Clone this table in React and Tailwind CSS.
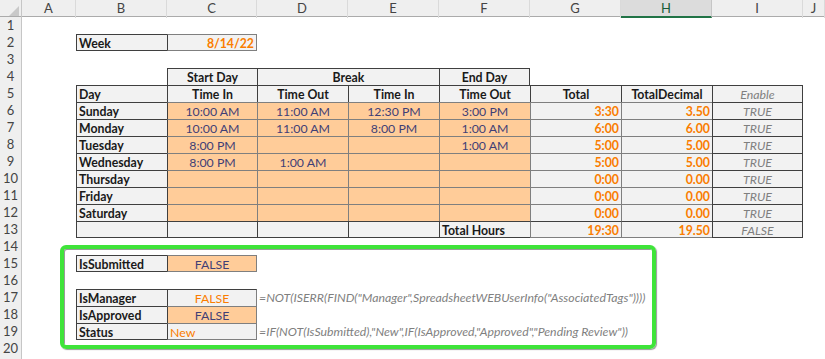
import React from "react";

// Timesheet workbook view: column/row headers, weekly grid and the approval block.

const EDGE = {
  t: { d: "border-t border-t-[#3f3f3f]", g: "border-t border-t-[#7f7f7f]" },
  l: { d: "border-l border-l-[#3f3f3f]", g: "border-l border-l-[#7f7f7f]" },
  r: { d: "border-r border-r-[#3f3f3f]", g: "border-r border-r-[#7f7f7f]" },
  b: { d: "border-b border-b-[#3f3f3f]", g: "border-b border-b-[#7f7f7f]" },
};

const KIND = {
  label: "bg-[#f2f2f2] font-bold text-[#1a1a1a] text-left pl-[2px]",
  head: "bg-[#f2f2f2] font-bold text-[#1a1a1a] text-center",
  input: "bg-[#ffcc99] text-[#3f3f76] text-center",
  calc: "bg-[#f2f2f2] font-bold text-[#fa7d00] text-right pr-[2px]",
  out: "bg-[#f2f2f2] text-[#fa7d00] text-center",
  outLeft: "bg-[#f2f2f2] text-[#fa7d00] text-left pl-[2px]",
  flag: "bg-[#f2f2f2] italic text-[#7f7f7f] text-center",
  blank: "bg-[#f2f2f2]",
  note: "italic text-[#7f7f7f] text-left pl-[2px] whitespace-nowrap overflow-visible",
  none: "",
};

const COLS = ["A", "B", "C", "D", "E", "F", "G", "H", "I", "J"];

// c(col, kind, text, edges, span) — col 0 is A, 1 is B ...
const c = (col, kind, text = "", edges = "", span = 1) => ({ col, kind, text, edges, span });

const days = [
  ["Sunday", "10:00 AM", "11:00 AM", "12:30 PM", "3:00 PM", "3:30", "3.50"],
  ["Monday", "10:00 AM", "11:00 AM", "8:00 PM", "1:00 AM", "6:00", "6.00"],
  ["Tuesday", "8:00 PM", "", "", "1:00 AM", "5:00", "5.00"],
  ["Wednesday", "8:00 PM", "1:00 AM", "", "", "5:00", "5.00"],
  ["Thursday", "", "", "", "", "0:00", "0.00"],
  ["Friday", "", "", "", "", "0:00", "0.00"],
  ["Saturday", "", "", "", "", "0:00", "0.00"],
];

const rows = {
  2: [c(1, "label", "Week", "td ld bd"), c(2, "calc", "8/14/22", "tg ld rg bg")],
  4: [
    c(2, "head", "Start Day", "td ld"),
    c(3, "head", "Break", "td ld", 2),
    c(5, "head", "End Day", "td ld rd"),
  ],
  5: [
    c(1, "label", "Day", "td ld"),
    c(2, "head", "Time In", "td ld"),
    c(3, "head", "Time Out", "td ld"),
    c(4, "head", "Time In", "td ld"),
    c(5, "head", "Time Out", "td ld"),
    c(6, "head", "Total", "td ld"),
    c(7, "head", "TotalDecimal", "td ld"),
    c(8, "flag", "Enable", "td ld rd"),
  ],
  13: [
    c(1, "blank", "", "td ld bd"),
    c(2, "blank", "", "td ld bd"),
    c(3, "blank", "", "td ld bd"),
    c(4, "blank", "", "td ld bd"),
    c(5, "label", "Total Hours", "td ld bd"),
    c(6, "calc", "19:30", "td lg bg"),
    c(7, "calc", "19.50", "td lg bg"),
    c(8, "flag", "FALSE", "td ld rd bd"),
  ],
  15: [c(1, "label", "IsSubmitted", "td ld bd"), c(2, "input", "FALSE", "tg ld rg bg")],
  17: [
    c(1, "label", "IsManager", "td ld"),
    c(2, "out", "FALSE", "td ld rg"),
    c(3, "note", '=NOT(ISERR(FIND("Manager",SpreadsheetWEBUserInfo("AssociatedTags"))))'),
  ],
  18: [c(1, "label", "IsApproved", "td ld"), c(2, "input", "FALSE", "tg ld rg")],
  19: [
    c(1, "label", "Status", "td ld bd"),
    c(2, "outLeft", "New", "tg ld rg bg"),
    c(3, "note", '=IF(NOT(IsSubmitted),"New",IF(IsApproved,"Approved","Pending Review"))'),
  ],
};

days.forEach((d, i) => {
  rows[6 + i] = [
    c(1, "label", d[0], "td ld"),
    c(2, "input", d[1], "tg ld"),
    c(3, "input", d[2], "tg lg"),
    c(4, "input", d[3], "tg lg"),
    c(5, "input", d[4], "tg lg"),
    c(6, "calc", d[5], "tg lg"),
    c(7, "calc", d[6], "tg lg"),
    c(8, "flag", "TRUE", "td ld rd"),
  ];
});

function edgeClasses(edges) {
  return edges
    .split(" ")
    .filter(Boolean)
    .map((e) => EDGE[e[0]][e[1]])
    .join(" ");
}

function SheetRow({ n, label }) {
  const cells = rows[n] || [];
  const filled = [];
  let col = 0;
  while (col < 10) {
    const cell = cells.find((x) => x.col === col);
    if (cell) {
      filled.push(cell);
      col += cell.span;
    } else {
      filled.push(c(col, "none"));
      col += 1;
    }
  }
  return (
    <div className="grid grid-cols-[22px_54px_91px_90px_91px_91px_91px_91px_91px_91px_1fr] h-[17px]">
      <div className="bg-[#efefef] border-r border-r-[#c6c6c6] text-[#444] text-[13px] leading-[17px] text-center">
        {label ? n : ""}
      </div>
      {filled.map((cell) => (
        <div
          key={cell.col}
          className={`box-border h-[17px] leading-[17px] text-[12.3px] ${cell.span === 2 ? "col-span-2" : ""} ${KIND[cell.kind]} ${edgeClasses(cell.edges)}`}
        >
          {cell.text}
        </div>
      ))}
      <div />
    </div>
  );
}

function ColumnHeader() {
  return (
    <div className="grid grid-cols-[22px_54px_91px_90px_91px_91px_91px_91px_91px_91px_1fr] h-[17px] bg-[#efefef] border-b border-b-[#ababab] box-border text-[13px] text-[#444] leading-[16px]">
      <div className="relative border-r border-r-[#c6c6c6]">
        <svg className="absolute right-[2px] bottom-[2px]" width="10" height="10" viewBox="0 0 10 10">
          <polygon points="10,0 10,10 0,10" fill="#c9c9c9" />
        </svg>
      </div>
      {COLS.map((L) =>
        L === "H" ? (
          <div key={L} className="text-center bg-[#dcdcdc] text-[#185c37] border-r border-r-[#c6c6c6] border-b-2 border-b-[#217346] box-border">
            {L}
          </div>
        ) : (
          <div key={L} className="text-center border-r border-r-[#dadada]">
            {L}
          </div>
        )
      )}
    </div>
  );
}

export default function App() {
  const nums = Array.from({ length: 21 }, (_, i) => i + 1);
  return (
    <div
      className="relative w-[825px] h-[359px] overflow-hidden bg-white"
      style={{ fontFamily: "Lato, 'Liberation Sans', sans-serif" }}
    >
      <ColumnHeader />
      {nums.map((n) => (
        <SheetRow key={n} n={n} label={n <= 20} />
      ))}
      {/* approval block highlight shape */}
      <div className="absolute left-[60px] top-[245px] w-[596px] h-[104px] rounded-[6px] border-4 border-[#3fe43a] shadow-[inset_1px_1px_0_#9a9a9a,1px_1px_1px_#9a9a9a]" />
    </div>
  );
}
